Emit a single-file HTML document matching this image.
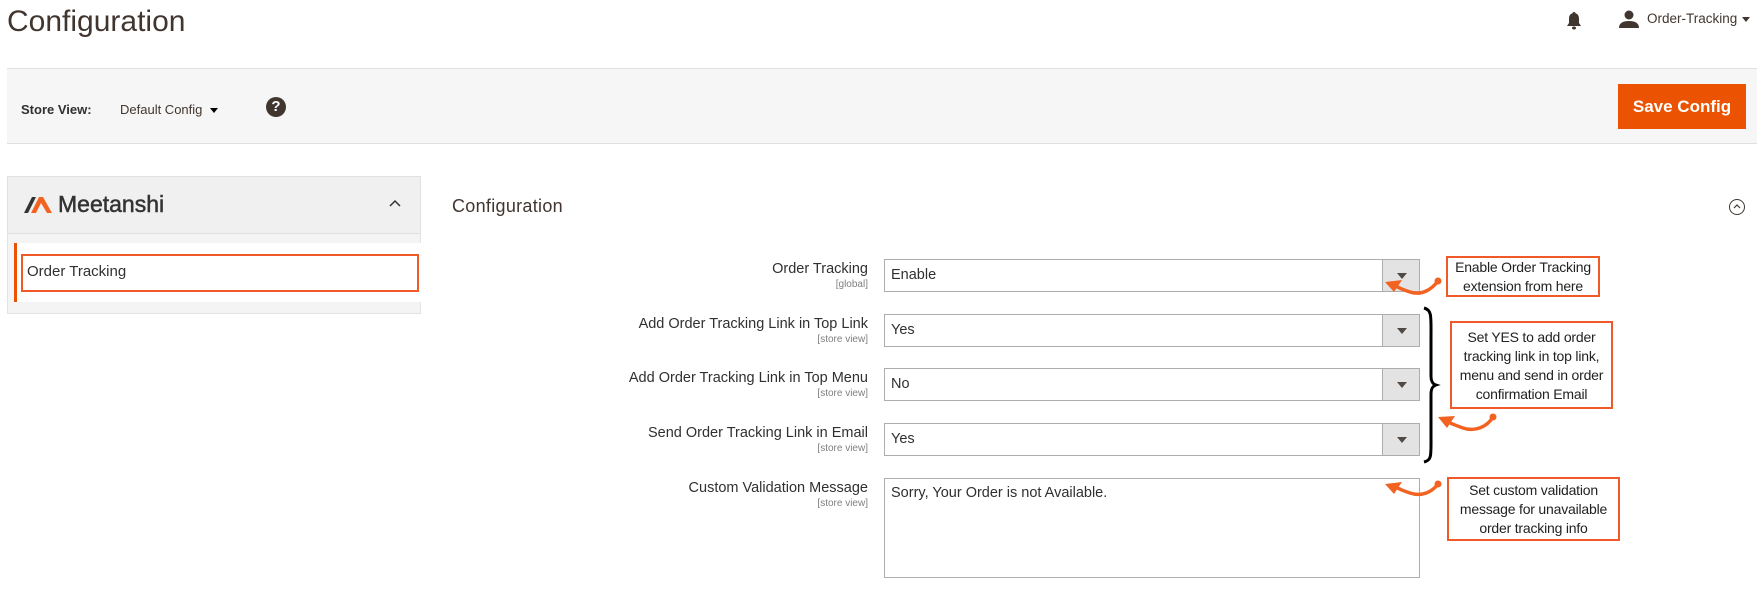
<!DOCTYPE html>
<html><head><meta charset="utf-8"><style>
*{margin:0;padding:0;box-sizing:border-box}
body{width:1757px;height:589px;background:#fff;font-family:"Liberation Sans",sans-serif;color:#303030;position:relative;overflow:hidden}
.a{position:absolute}
.title{left:7px;top:5px;font-size:30px;color:#41362f}
.toolbar{left:7px;top:68px;width:1750px;height:76px;background:#f6f6f6;border-top:1px solid #e0e0e0;border-bottom:1px solid #e0e0e0}
.save{left:1618px;top:84px;width:128px;height:45px;background:#eb5202;color:#fff;font-weight:bold;font-size:17px;text-align:center;line-height:45px}
.side{left:7px;top:176px;width:414px;height:138px;background:#f4f4f4;border:1px solid #e3e3e3}
.sideh{left:7px;top:176px;width:414px;height:58px;background:#f0f0f0;border:1px solid #e0e0e0}
.item{left:14px;top:243px;width:407px;height:59px;background:#fff}
.bar{left:14px;top:243px;width:3px;height:59px;background:#eb5202}
.obox{left:21px;top:254px;width:398px;height:38px;border:2px solid #f05a28}
.lbl{right:889px;text-align:right;font-size:14.5px;color:#303030}
.lbl small{display:block;font-size:10px;color:#808080;margin-top:2px}
.sel{left:884px;width:536px;height:33px;border:1px solid #adadad;background:#fff;font-size:14.5px;line-height:31px;padding-left:6px}
.sel i{position:absolute;right:0;top:0;width:37px;height:31px;background:#e3e3e3;border-left:1px solid #adadad}
.sel i:after{content:"";position:absolute;left:14px;top:13px;border:5px solid transparent;border-top:6px solid #514943;border-bottom:0}
.note{border:2.5px solid #f05a28;font-size:14px;letter-spacing:-0.2px;color:#222;text-align:center;line-height:19px;background:#fff;white-space:nowrap}
</style></head><body>
<div class="a title">Configuration</div>
<svg class="a" style="left:1566px;top:12px" width="16" height="18" viewBox="0 0 16 18"><path d="M8 0c1 0 1.5.6 1.5 1.3C12 2 13 4 13 7v4l2 3H1l2-3V7c0-3 1-5 3.5-5.7C6.5.6 7 0 8 0z" fill="#41362f"/><ellipse cx="8" cy="16" rx="2" ry="1.5" fill="#41362f"/></svg>
<svg class="a" style="left:1619px;top:10px" width="20" height="18" viewBox="0 0 20 18"><circle cx="10" cy="5" r="4.5" fill="#41362f"/><path d="M0 18c0-5 4-7 10-7s10 2 10 7z" fill="#41362f"/></svg>
<div class="a" style="left:1647px;top:11px;font-size:13.5px;color:#41362f">Order-Tracking</div>
<div class="a" style="left:1742px;top:17px;border:4px solid transparent;border-top:5px solid #41362f"></div>
<div class="a toolbar"></div>
<div class="a" style="left:21px;top:102px;font-size:13px;font-weight:bold;color:#303030">Store View:</div>
<div class="a" style="left:120px;top:102px;font-size:13px;color:#41362f">Default Config</div>
<div class="a" style="left:210px;top:108px;border:4px solid transparent;border-top:5px solid #000"></div>
<div class="a" style="left:266px;top:97px;width:20px;height:20px;border-radius:50%;background:#41362f;color:#fff;font-weight:bold;font-size:15px;text-align:center;line-height:20px">?</div>
<div class="a save">Save Config</div>
<div class="a side"></div>
<div class="a sideh"></div>
<svg class="a" style="left:24px;top:196px" width="30" height="18" viewBox="0 0 30 18"><path d="M0 17L8 1h4L4 17z" fill="#333"/><path d="M7 17L15 1h4l9 16h-5L17 7l-5 10z" fill="#f26322"/></svg>
<div class="a" style="left:58px;top:191px;font-size:23px;color:#333;-webkit-text-stroke:0.5px #333">Meetanshi</div>
<svg class="a" style="left:389px;top:199px" width="12" height="8" viewBox="0 0 12 8"><path d="M1 7l5-5 5 5" fill="none" stroke="#333" stroke-width="1.5"/></svg>
<div class="a item"></div>
<div class="a bar"></div>
<div class="a obox"></div>
<div class="a" style="left:27px;top:263px;font-size:15px;color:#303030">Order Tracking</div>
<div class="a" style="left:452px;top:196px;font-size:18px;color:#41362f;letter-spacing:.3px">Configuration</div>
<div class="a" style="left:1729px;top:199px;width:16px;height:16px;border:1px solid #41362f;border-radius:50%"></div>
<svg class="a" style="left:1733px;top:204px" width="8" height="5" viewBox="0 0 8 5"><path d="M1 4l3-3 3 3" fill="none" stroke="#41362f" stroke-width="1.2"/></svg>

<div class="a lbl" style="top:261px">Order Tracking<small>[global]</small></div>
<div class="a sel" style="top:259px">Enable<i></i></div>
<div class="a lbl" style="top:316px">Add Order Tracking Link in Top Link<small>[store view]</small></div>
<div class="a sel" style="top:314px">Yes<i></i></div>
<div class="a lbl" style="top:370px">Add Order Tracking Link in Top Menu<small>[store view]</small></div>
<div class="a sel" style="top:368px">No<i></i></div>
<div class="a lbl" style="top:425px">Send Order Tracking Link in Email<small>[store view]</small></div>
<div class="a sel" style="top:423px">Yes<i></i></div>
<div class="a lbl" style="top:480px">Custom Validation Message<small>[store view]</small></div>
<div class="a" style="left:884px;top:478px;width:536px;height:100px;border:1px solid #adadad;font-size:14.5px;padding:6px 6px">Sorry, Your Order is not Available.</div>

<div class="a note" style="left:1446px;top:256px;width:154px;height:41px;padding-top:0px">Enable Order Tracking<br>extension from here</div>
<div class="a note" style="left:1450px;top:321px;width:163px;height:88px;padding-top:5px">Set YES to add order<br>tracking link in top link,<br>menu and send in order<br>confirmation Email</div>
<div class="a note" style="left:1447px;top:477px;width:173px;height:64px;padding-top:2px">Set custom validation<br>message for unavailable<br>order tracking info</div>
<svg class="a" style="left:0;top:0" width="1757" height="589">
<path d="M1424 308c8 2 7 8 7 30v38c0 6 2 8 5 9c-3 1-5 3-5 9v40c0 22 1 26-7 28" fill="none" stroke="#000" stroke-width="3"/>
<g fill="none" stroke="#f26322" stroke-width="3.5"><path d="M1438 281c-6 8-16 15-28 11c-6-2-11-4-14-6"/><path d="M1493 417c-6 10-18 15-30 11c-6-2-10-4-13-5"/><path d="M1438 484c-6 8-16 13-28 9c-6-2-11-4-14-6"/></g>
<g fill="#f26322"><circle cx="1438" cy="281" r="3.5"/><circle cx="1493" cy="417" r="3.5"/><circle cx="1438" cy="484" r="3.5"/>
<path d="M1385 282l17-2-8 12z"/><path d="M1438 417l17-1-8 12z"/><path d="M1385 484l17-2-8 12z"/></g>
</svg>
</body></html>
